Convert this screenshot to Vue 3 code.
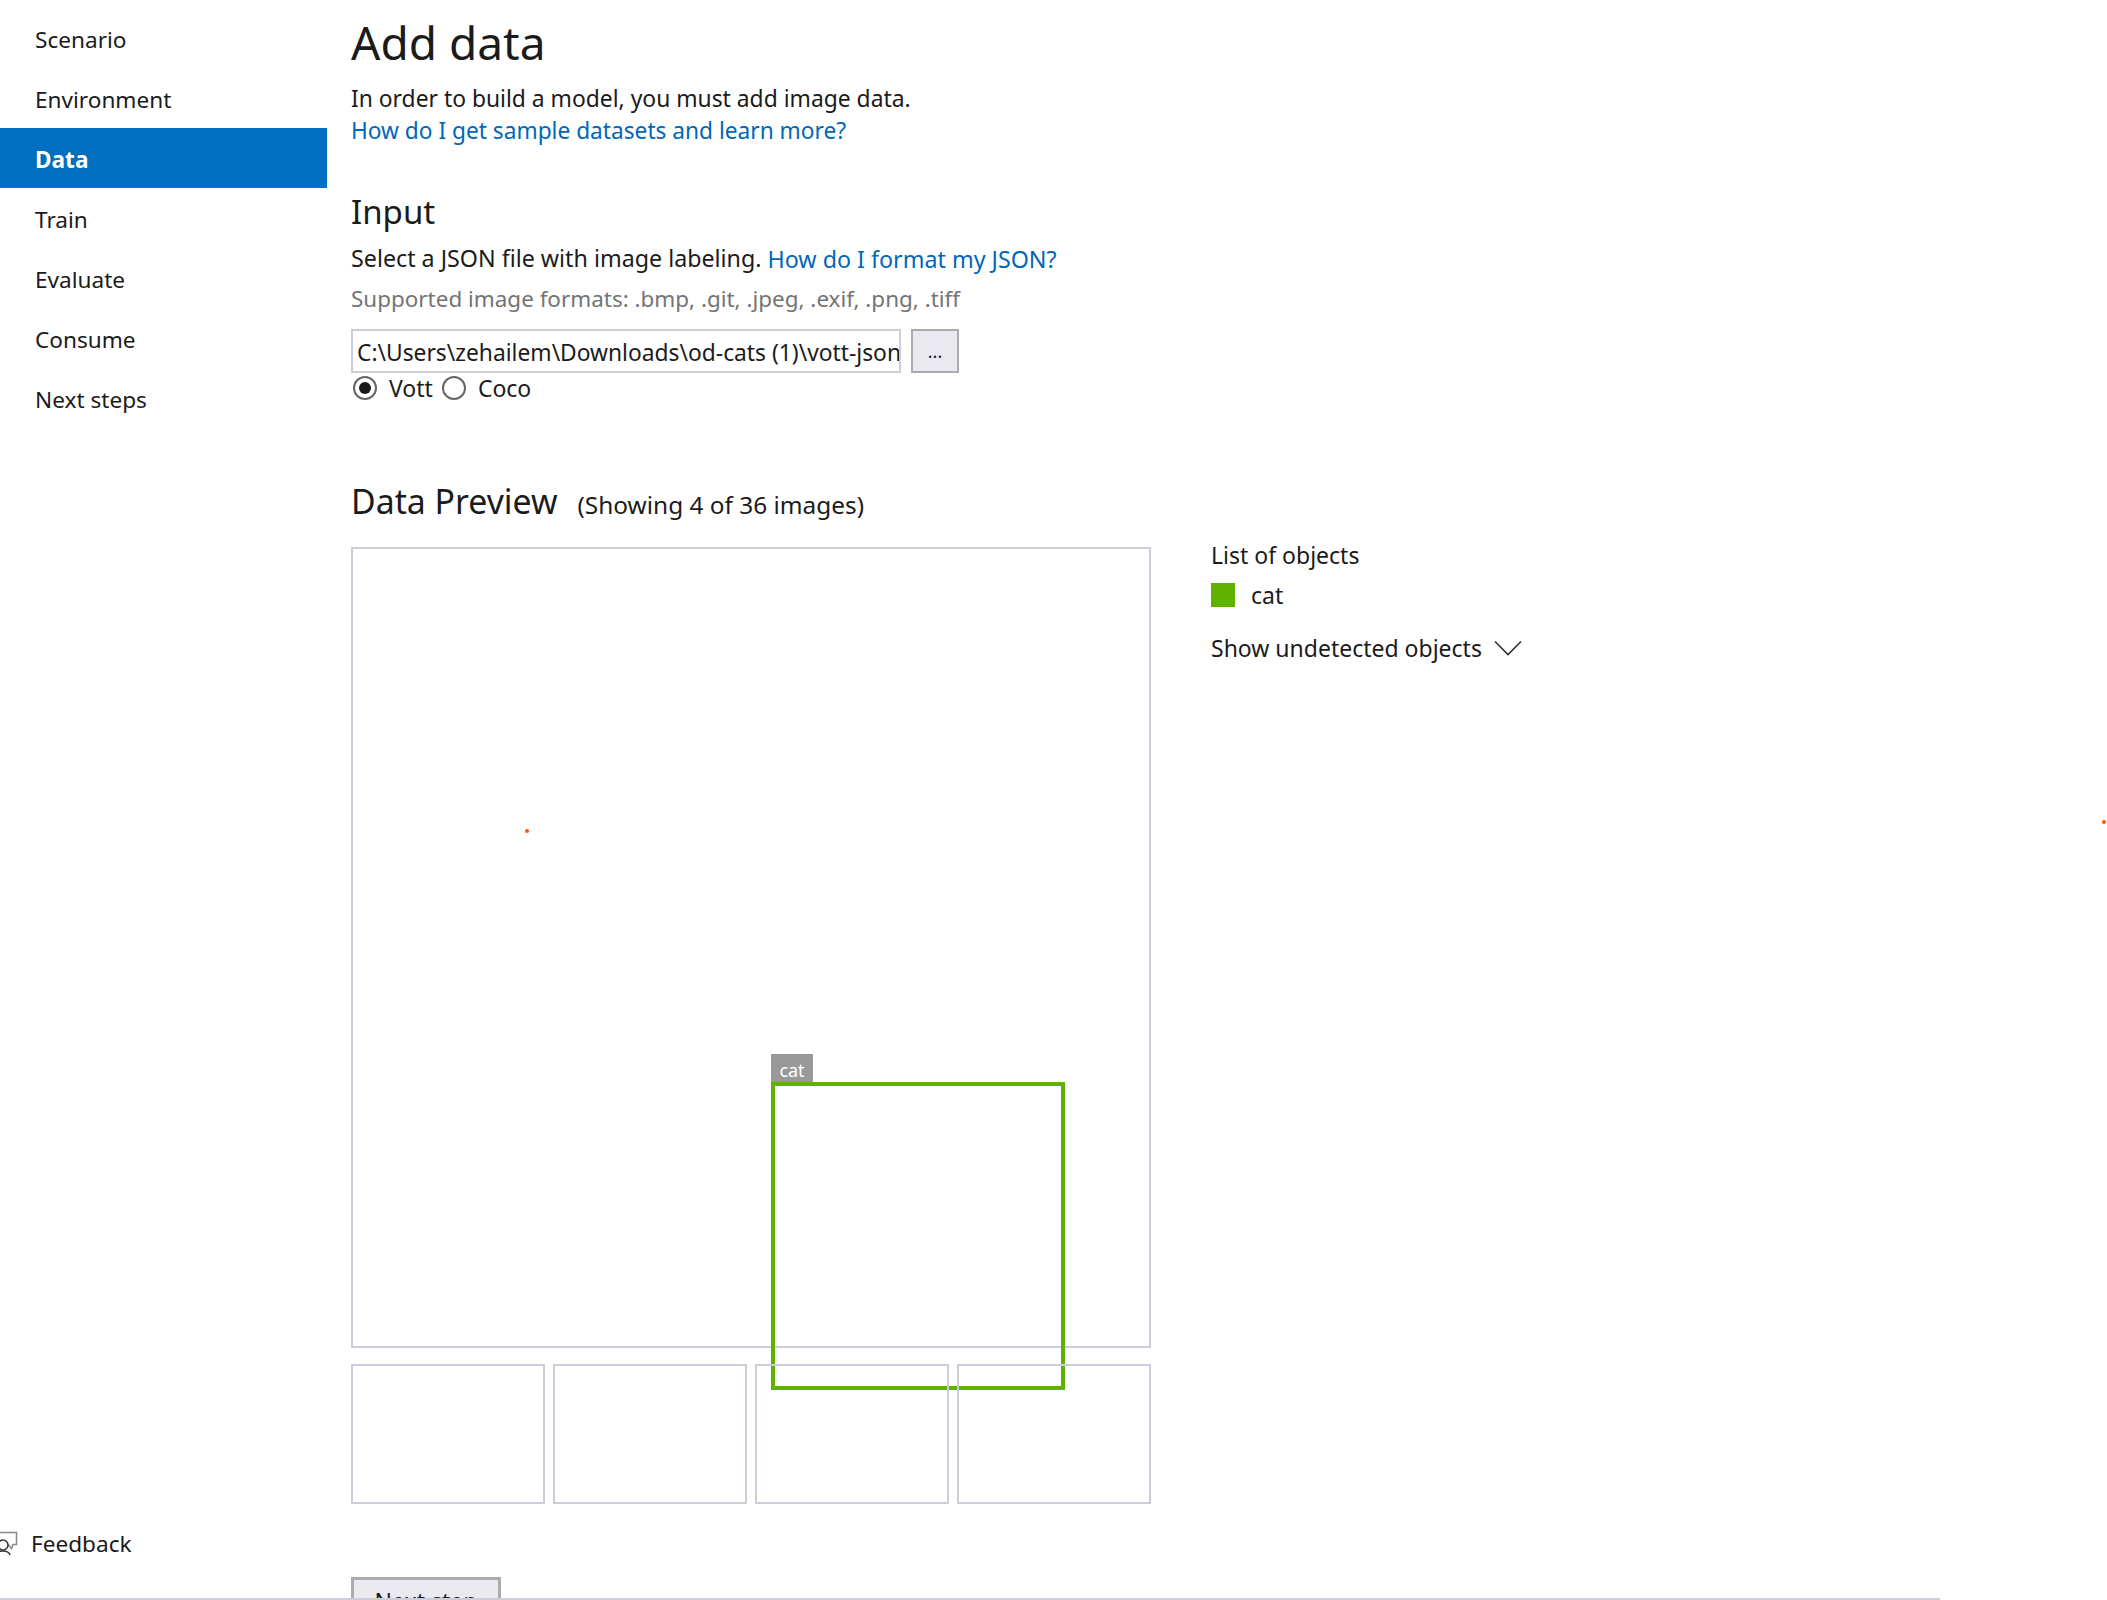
<template>
  <div class="page">
    <aside class="sidebar">
      <nav class="nav">
        <a
          v-for="item in navItems"
          :key="item"
          class="nav-item"
          :class="{ 'nav-item--active': item === 'Data' }"
        >{{ item }}</a>
      </nav>
      <div class="feedback">
        <svg class="feedback-icon" width="18" height="26" viewBox="0 0 18 26" fill="none">
          <path d="M0 1.5H16.5V13.5H13L11.5 17.5L8 13.5" stroke="#888" stroke-width="1.5" />
          <circle cx="3" cy="14" r="5" fill="#fff" stroke="#333" stroke-width="1.5" />
          <path d="M-6 25C-4 21 0 20 3 20C6 20 9 21 10 24" stroke="#333" stroke-width="1.5" />
        </svg>
        <span>Feedback</span>
      </div>
    </aside>

    <main class="main">
      <h1 class="title">Add data</h1>
      <p class="line intro">In order to build a model, you must add image data.</p>
      <a class="line link help-link">How do I get sample datasets and learn more?</a>

      <h2 class="subtitle input-title">Input</h2>
      <p class="line select-line">
        Select a JSON file with image labeling.
        <a class="link json-link">How do I format my JSON?</a>
      </p>
      <p class="line formats">Supported image formats: .bmp, .git, .jpeg, .exif, .png, .tiff</p>

      <div class="file-row">
        <input class="file-input" type="text" readonly value="C:\Users\zehailem\Downloads\od-cats (1)\vott-json-export\od-cats.json" />
        <button class="browse" type="button">...</button>
      </div>
      <div class="radios">
        <span class="radio radio--on"></span>
        <span class="radio-label">Vott</span>
        <span class="radio"></span>
        <span class="radio-label">Coco</span>
      </div>

      <div class="preview-head">
        <h2 class="subtitle">Data Preview</h2>
        <span class="count">(Showing 4 of 36 images)</span>
      </div>

      <div class="preview-row">
        <div class="preview-col">
          <div class="preview">
            <span class="speck"></span>
            <div class="bbox">
              <span class="bbox-label">cat</span>
            </div>
          </div>
          <div class="thumbs">
            <div v-for="n in 4" :key="n" class="thumb"></div>
          </div>
        </div>

        <div class="objects">
          <div class="objects-title">List of objects</div>
          <div class="object">
            <span class="swatch"></span>
            <span>cat</span>
          </div>
          <div class="undetected">
            <span>Show undetected objects</span>
            <svg width="28" height="16" viewBox="0 0 28 16" fill="none">
              <path d="M1 1.5L14 14.5L27 1.5" stroke="#333" stroke-width="1.6" />
            </svg>
          </div>
        </div>
      </div>

      <button class="next" type="button">Next step</button>
    </main>

    <span class="speck speck--edge"></span>
    <div class="bottom-rule"></div>
  </div>
</template>

<script setup>
const navItems = ['Scenario', 'Environment', 'Data', 'Train', 'Evaluate', 'Consume', 'Next steps']
</script>

<style>
html,
body {
  margin: 0;
  background: #fff;
  overflow: hidden;
}
</style>

<style scoped>
.page {
  position: relative;
  display: flex;
  width: 2107px;
  height: 1600px;
  overflow: hidden;
  background: #fff;
  color: #1b1b1b;
  font-family: "Noto Sans", "Open Sans", sans-serif;
  font-size: 23px;
  line-height: 32px;
}

.sidebar {
  display: flex;
  flex-direction: column;
  flex: 0 0 327px;
  height: 1600px;
  padding-top: 8px;
  box-sizing: border-box;
  margin-right: 24px;
  font-size: 22.6px;
}

.nav {
  display: flex;
  flex-direction: column;
}

.nav-item {
  display: flex;
  align-items: center;
  box-sizing: border-box;
  height: 60px;
  padding: 3px 0 0 35px;
}

.nav-item--active {
  background: #006fc1;
  color: #fff;
  font-weight: 700;
}

.feedback {
  display: flex;
  align-items: center;
  gap: 13px;
  margin-top: auto;
  margin-bottom: 40px;
}

.feedback-icon {
  overflow: hidden;
}

.main {
  flex: 1;
  min-width: 0;
}

.title {
  margin: 10px 0 0;
  font-size: 46px;
  font-weight: 400;
  line-height: 64px;
}

.line {
  display: block;
  margin: 0;
}

.intro {
  margin-top: 9px;
  font-size: 22.85px;
}

.link {
  color: #0067b8;
}

.help-link {
  font-size: 22.7px;
}

.subtitle {
  margin: 0;
  font-size: 33.8px;
  font-weight: 400;
  line-height: 46px;
}

.input-title {
  margin-top: 42px;
  font-size: 33px;
}

.select-line {
  margin-top: 7px;
  font-size: 23.25px;
}

.json-link {
  vertical-align: -1px;
}

.formats {
  margin-top: 8px;
  color: #747474;
  font-size: 22.45px;
}

.file-row {
  display: flex;
  gap: 10px;
  margin-top: 14px;
}

.file-input {
  box-sizing: border-box;
  width: 550px;
  height: 44px;
  padding: 2px 0 0 4px;
  border: 2px solid #cbccdc;
  outline: none;
  font: inherit;
  font-size: 22.8px;
  color: inherit;
}

.browse {
  box-sizing: border-box;
  width: 48px;
  height: 44px;
  padding: 0;
  border: 2px solid #ababab;
  background: #e9e9ef;
  font: inherit;
  font-size: 18px;
  color: inherit;
}

.radios {
  display: flex;
  align-items: center;
  height: 32px;
  margin-top: -1px;
}

.radio {
  position: relative;
  box-sizing: border-box;
  width: 24px;
  height: 24px;
  margin-left: 2px;
  border: 2px solid #666;
  border-radius: 50%;
}

.radio--on::after {
  content: "";
  position: absolute;
  inset: 4px;
  border-radius: 50%;
  background: #1b1b1b;
}

.radio-label {
  margin-left: 12px;
  margin-right: 7px;
}

.preview-head {
  display: flex;
  align-items: baseline;
  gap: 20px;
  margin-top: 74px;
}

.count {
  font-size: 24.4px;
}

.preview-row {
  display: flex;
  gap: 60px;
  margin-top: 23px;
}

.preview-col {
  width: 800px;
}

.preview {
  position: relative;
  box-sizing: border-box;
  width: 800px;
  height: 801px;
  border: 2px solid #cbccdc;
}

.bbox {
  position: absolute;
  left: 418px;
  top: 533px;
  box-sizing: border-box;
  width: 294px;
  height: 308px;
  border: 4px solid #5fb300;
}

.bbox-label {
  position: absolute;
  left: -4px;
  top: -32px;
  width: 42px;
  height: 28px;
  background: #999;
  color: #fff;
  font-size: 18px;
  line-height: 32px;
  text-align: center;
}

.speck {
  position: absolute;
  left: 172px;
  top: 280px;
  width: 4px;
  height: 4px;
  border-radius: 50%;
  background: #ff5a00;
}

.speck--edge {
  left: 2102px;
  top: 820px;
}

.thumbs {
  position: relative;
  z-index: 1;
  display: grid;
  grid-template-columns: repeat(4, 1fr);
  gap: 8px;
  margin-top: 16px;
}

.thumb {
  box-sizing: border-box;
  height: 140px;
  border: 2px solid #cbccdc;
}

.objects {
  margin-top: -8px;
}

.objects-title {
  height: 32px;
}

.object {
  display: flex;
  align-items: center;
  gap: 16px;
  margin-top: 8px;
  height: 32px;
}

.swatch {
  width: 24px;
  height: 24px;
  background: #5fb300;
}

.undetected {
  display: flex;
  align-items: center;
  gap: 12px;
  margin-top: 21px;
}

.next {
  display: block;
  box-sizing: border-box;
  width: 150px;
  height: 48px;
  margin-top: 73px;
  border: 3px solid #ababab;
  background: #e9e9ef;
  font: inherit;
  color: inherit;
}

.bottom-rule {
  position: absolute;
  left: 0;
  bottom: 0;
  width: 1940px;
  height: 2px;
  background: #cbccdc;
}
</style>
